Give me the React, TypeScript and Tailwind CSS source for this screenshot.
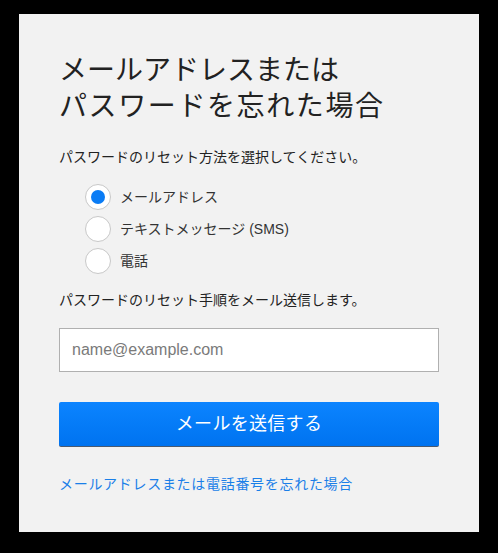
import React, { useState } from 'react';

const methods = [
  { id: 'email', label: 'メールアドレス' },
  { id: 'sms', label: 'テキストメッセージ (SMS)' },
  { id: 'phone', label: '電話' },
];

const jp = "font-['Liberation_Sans','Noto_Sans_CJK_JP',sans-serif]";

export default function App() {
  const [method, setMethod] = useState('email');

  return (
    <div className="min-h-screen bg-black pt-[14px] pl-[19px]">
      {/* Reset panel */}
      <div className={`w-[460px] h-[518px] bg-[#f2f2f2] pl-[40px] pr-[40px] pt-[39px] text-[#222] ${jp}`}>
        <h1 className="text-[28px] leading-[36px] font-normal">
          <span className="block">メールアドレスまたは</span>
          <span className="block tracking-[1.6px]">パスワードを忘れた場合</span>
        </h1>

        <p className="mt-[22px] text-[14px] leading-[20px]">
          パスワードのリセット方法を選択してください。
        </p>

        <div className="mt-[14px] pl-[26px] flex flex-col">
          {methods.map((m) => (
            <label key={m.id} className="h-[32px] flex items-center gap-[9px] cursor-pointer">
              <span className="w-[26px] h-[26px] rounded-full bg-white border border-[#c8c8c8] flex items-center justify-center">
                {method === m.id && <span className="w-[14px] h-[14px] rounded-full bg-[#0a7cf5]" />}
              </span>
              <input
                type="radio"
                name="method"
                className="hidden"
                checked={method === m.id}
                onChange={() => setMethod(m.id)}
              />
              <span className="text-[14px] leading-[20px] text-[#333]">{m.label}</span>
            </label>
          ))}
        </div>

        <p className="mt-[13px] text-[14px] leading-[20px]">
          パスワードのリセット手順をメール送信します。
        </p>

        <input
          type="email"
          placeholder="name@example.com"
          className="mt-[18px] block w-[380px] h-[44px] bg-white border border-[#b0b0b0] px-[12px] text-[16px] font-['Liberation_Sans',sans-serif] placeholder:text-[#7a7a7a] outline-none"
        />

        <button className="mt-[30px] w-[380px] h-[45px] rounded-[2px] bg-gradient-to-b from-[#0c84ff] to-[#0073f0] border-b border-[#4a5a70] text-white text-[18px] leading-[24px] tracking-[0.3px]">
          メールを送信する
        </button>

        <a href="#" className="mt-[27px] block text-[14px] leading-[20px] text-[#1a7fe8] tracking-[0.7px]">
          メールアドレスまたは電話番号を忘れた場合
        </a>
      </div>
    </div>
  );
}
